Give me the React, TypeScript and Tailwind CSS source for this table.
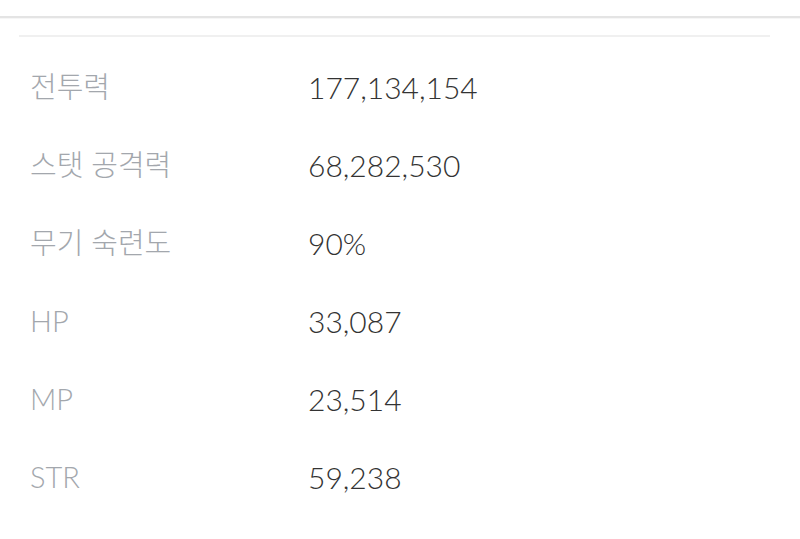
const rows = [
  ["전투력", "177,134,154"],
  ["스탯 공격력", "68,282,530"],
  ["무기 숙련도", "90%"],
  ["HP", "33,087"],
  ["MP", "23,514"],
  ["STR", "59,238"],
];

export default function App() {
  return (
    <div className="w-[800px] h-[539px] bg-white overflow-hidden" style={{ fontFamily: "Lato, 'Noto Sans CJK KR', sans-serif" }}>
      <div className="h-[16px]" />
      <div className="h-[2px] bg-[#e4e4e4]" />
      <div className="h-[1px] bg-[#f6f6f6]" />
      <div className="px-[19px] pt-[16px]">
        <div className="h-[2px] bg-[#f0f0f0] w-[751px]" />
      </div>
      <div className="pt-[11px] px-[30px]">
        {rows.map(([k, v]) => (
          <div key={k} className="flex items-center h-[78px]">
            <div className="w-[278px] text-[29px] text-[#a3a7ad] font-light">{k}</div>
            <div className="text-[30px] text-[#333333] font-light">{v}</div>
          </div>
        ))}
      </div>
    </div>
  );
}
